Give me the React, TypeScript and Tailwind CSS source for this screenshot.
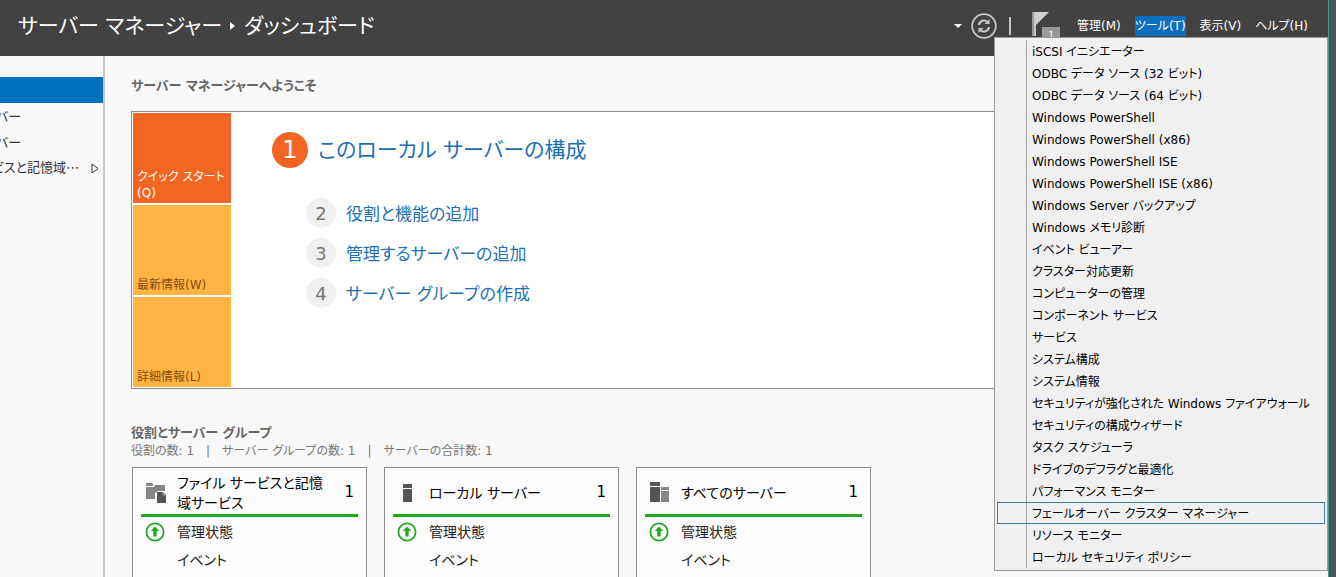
import type { ReactNode } from 'react';

const tools = [
  'iSCSI イニシエーター',
  'ODBC データ ソース (32 ビット)',
  'ODBC データ ソース (64 ビット)',
  'Windows PowerShell',
  'Windows PowerShell (x86)',
  'Windows PowerShell ISE',
  'Windows PowerShell ISE (x86)',
  'Windows Server バックアップ',
  'Windows メモリ診断',
  'イベント ビューアー',
  'クラスター対応更新',
  'コンピューターの管理',
  'コンポーネント サービス',
  'サービス',
  'システム構成',
  'システム情報',
  'セキュリティが強化された Windows ファイアウォール',
  'セキュリティの構成ウィザード',
  'タスク スケジューラ',
  'ドライブのデフラグと最適化',
  'パフォーマンス モニター',
  'フェールオーバー クラスター マネージャー',
  'リソース モニター',
  'ローカル セキュリティ ポリシー',
];
const focusedTool = 'フェールオーバー クラスター マネージャー';

const steps = ['役割と機能の追加', '管理するサーバーの追加', 'サーバー グループの作成'];

function FilesIcon() {
  return (
    <svg width="22" height="22" viewBox="0 0 22 22" aria-hidden="true">
      <path d="M1 1h6l1 1v2H1zM1 5h8l1-2h10v6h-7l-3 2v6H1z" fill="#868686" />
      <path d="M12 10h6l3 3v8h-9z" fill="#555" />
      <path d="M18 10v3h3" fill="none" stroke="#fcfcfc" strokeWidth="0.5" />
    </svg>
  );
}

function ServerIcon() {
  return (
    <svg width="22" height="22" viewBox="0 0 22 22" aria-hidden="true">
      <path d="M6 2h9v4H6zM6 7h9v13H6z" fill="#555" />
    </svg>
  );
}

function ServersIcon() {
  return (
    <svg width="22" height="22" viewBox="0 0 22 22" aria-hidden="true">
      <path d="M1 0h10v4H1zM1 5h10v15H1z" fill="#555" />
      <path d="M12 5h8v3h-8zM12 9h8v11h-8z" fill="#868686" />
    </svg>
  );
}

function UpIcon() {
  return (
    <svg width="20" height="20" viewBox="0 0 20 20" aria-hidden="true">
      <circle cx="10" cy="10" r="8.6" fill="none" stroke="#22a822" strokeWidth="1.8" />
      <path d="M10 4.500l4.200 4.500h-2.500v5.500H8.300V9H5.800z" fill="#22a822" />
    </svg>
  );
}

function GroupCard({ title, icon }: { title: string; icon: ReactNode }) {
  return (
    <article className="h-60 w-[235px] shrink-0 border border-[#8e8e8e] bg-[#fcfcfc] px-2">
      <header className="flex h-[49px] items-center border-b-3 border-[#22a822] px-1 pt-1">
        <span className="w-8 shrink-0">{icon}</span>
        <h3 className="w-[150px] text-sm leading-5 text-black">{title}</h3>
        <span className="ml-auto text-[15px] text-black">1</span>
      </header>
      <div className="grid grid-cols-[36px_1fr] items-center pt-px text-sm leading-7 text-[#222]">
        <span className="pl-1">
          <UpIcon />
        </span>
        <a href="#status">管理状態</a>
        <span />
        <a href="#events">イベント</a>
      </div>
    </article>
  );
}

export default function App() {
  return (
    <div className="relative flex h-screen overflow-hidden bg-[#f8f8f8] font-['DejaVu_Sans','Noto_Sans_CJK_JP',sans-serif] text-xs [font-feature-settings:'palt']">
      <div className="flex min-w-0 flex-1 flex-col">
        <header className="flex h-14 shrink-0 items-center bg-[#424242] text-white">
          <h1 className="flex items-center pb-1 pl-[18px] text-[21px] whitespace-nowrap">
            サーバー マネージャー
            <svg className="mx-2" width="6" height="10" viewBox="0 0 6 10" aria-hidden="true">
              <path d="M0 1l5 4-5 4z" fill="#fff" />
            </svg>
            ダッシュボード
          </h1>
          <div className="ml-auto flex h-14 items-center pb-1">
            <button aria-label="履歴" className="mr-2">
              <svg width="10" height="6" viewBox="0 0 10 6">
                <path d="M1 1h8L5 5z" fill="#fff" />
              </svg>
            </button>
            <button aria-label="最新の情報に更新">
              <svg width="26" height="26" viewBox="0 0 26 26" fill="none" stroke="#c8c8c8">
                <circle cx="13" cy="13" r="11.800" strokeWidth="1.800" />
                <path d="M8 12a5 5 0 0 1 8.500-3M18 14a5 5 0 0 1-8.500 3" strokeWidth="2.200" />
                <path d="M18.500 6v5h-5zM7.500 20v-5h5z" fill="#c8c8c8" stroke="none" />
              </svg>
            </button>
            <span className="mx-3 h-[18px] w-0.5 bg-[#c8c8c8]" />
            <button aria-label="通知 1" className="mr-4 ml-1.5">
              <svg width="32" height="28" viewBox="0 0 32 28">
                <path d="M3 0h2v24H3z" fill="#999" />
                <path d="M5 0h2v24H5z" fill="#c8c8c8" />
                <path d="M7 0h13L7 13z" fill="#d0d0d0" />
                <path d="M13 15h18v13H13z" fill="#999" />
                <text x="19" y="27" fontSize="10" fill="#fff">1</text>
              </svg>
            </button>
            <nav className="flex items-center gap-[14px] pr-5 leading-5 whitespace-nowrap">
              <button>管理(M)</button>
              <button className="bg-[#0c6fbd]">ツール(T)</button>
              <button>表示(V)</button>
              <button>ヘルプ(H)</button>
            </nav>
          </div>
        </header>
        <div className="flex min-h-0 flex-1">
          <nav className="w-[105px] shrink-0 border-r-2 border-[#c8c8c8] pt-[21px] text-[13px] text-[#333]">
            <div className="h-[26px] bg-[#0072bc]" />
            <a href="#local" className="-ml-1 block h-[26px] leading-7">バー</a>
            <a href="#all" className="-ml-1 block h-[26px] leading-7">バー</a>
            <a href="#files" className="-ml-1 flex h-[26px] items-center leading-7 whitespace-nowrap">
              <span className="-ml-1">ビスと記憶域⋯</span>
              <svg className="mr-1 ml-auto" width="8" height="11" viewBox="0 0 8 11" aria-hidden="true">
                <path d="M1 1l6 4.500L1 10z" fill="none" stroke="#333" />
              </svg>
            </a>
          </nav>
          <main className="min-w-0 flex-1 overflow-hidden pt-5 pl-[26px]">
            <h2 className="text-[13px] leading-5 font-bold text-[#666]">サーバー マネージャーへようこそ</h2>
            <section className="mt-[15px] flex h-[278px] border border-[#8e8e8e] bg-white p-px">
              <div className="flex w-[98px] shrink-0 flex-col gap-0.5">
                <button className="flex flex-1 items-end bg-[#f26522] px-1 pb-0.5 text-left leading-4 text-white">クイック スタート (Q)</button>
                <button className="flex flex-1 items-end bg-[#ffb443] px-1 pb-0.5 text-left leading-4 text-[#8a4b08]">最新情報(W)</button>
                <button className="flex flex-1 items-end bg-[#ffb443] px-1 pb-0.5 text-left leading-4 text-[#8a4b08]">詳細情報(L)</button>
              </div>
              <div className="pt-[19px] pl-[41px] text-[#1e6fb4]">
                <a href="#configure" className="flex items-center gap-[10px] text-[21px] leading-9">
                  <span className="size-9 rounded-full bg-[#f26522] text-center text-2xl leading-9 text-white">1</span>
                  このローカル サーバーの構成
                </a>
                <ol className="mt-[30px] ml-[34px] flex flex-col gap-[10px]">
                  {steps.map((step, i) => (
                    <li key={step}>
                      <a href="#step" className="flex items-center gap-[10px] text-[17px] leading-8">
                        <span className="size-[30px] rounded-full bg-[#f0f0f0] text-center text-lg leading-8 text-[#777]">{i + 2}</span>
                        <span className="h-[30px]">{step}</span>
                      </a>
                    </li>
                  ))}
                </ol>
              </div>
            </section>
            <h2 className="mt-[34px] text-[13px] leading-5 font-bold text-[#666]">役割とサーバー グループ</h2>
            <p className="flex gap-3 leading-4 text-[#777]">
              <span>役割の数: 1</span>
              <span>|</span>
              <span>サーバー グループの数: 1</span>
              <span>|</span>
              <span>サーバーの合計数: 1</span>
            </p>
            <div className="mt-2 flex gap-[17px] pl-px">
              <GroupCard title="ファイル サービスと記憶域サービス" icon={<FilesIcon />} />
              <GroupCard title="ローカル サーバー" icon={<ServerIcon />} />
              <GroupCard title="すべてのサーバー" icon={<ServersIcon />} />
            </div>
          </main>
        </div>
      </div>
      <div className="w-2 shrink-0 border-l border-[#3f9b90] bg-[#4a555c]" />
      <ul role="menu" className="absolute top-[37px] right-2 w-[334px] border border-[#999] bg-[#f0f0f0] px-0.5 py-0.5 text-black">
        {tools.map((tool) => (
          <li key={tool} role="none">
            <button
              role="menuitem"
              className={
                tool === focusedTool
                  ? 'flex h-[22px] w-full border border-[#3b79a8] pl-7 leading-[22px]'
                  : 'flex h-[22px] w-full pl-[29px] leading-6'
              }
            >
              <span className="h-full border-l border-[#a0a0a0] pl-[5px] whitespace-nowrap">{tool}</span>
            </button>
          </li>
        ))}
      </ul>
    </div>
  );
}
